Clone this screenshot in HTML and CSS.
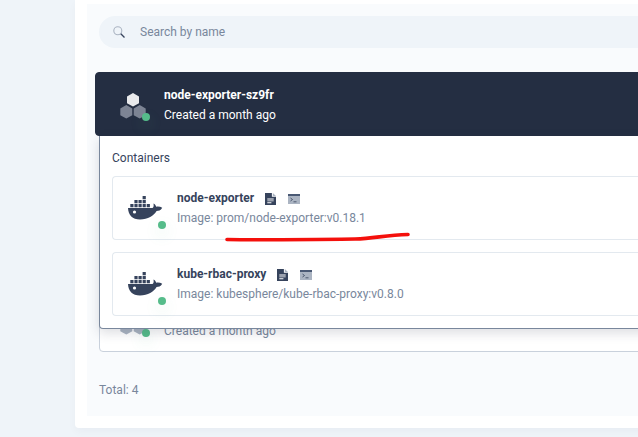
FILE: index.html
```html
<!DOCTYPE html>
<html lang="en">
<head>
<meta charset="utf-8">
<title>Pods</title>
<link rel="stylesheet" href="styles.css">
</head>
<body>
<svg width="0" height="0" class="defs" aria-hidden="true">
  <symbol id="hexes" viewBox="0 0 28 28">
    <path d="M14 1l6 3.4v6.8l-6 3.4-6-3.4V4.400z" fill="#fff" fill-opacity=".9"/>
    <path d="M7.300 13l6 3.400v6.800l-6 3.400-6-3.400v-6.800z" fill="currentColor"/>
    <path d="M20.700 13l6 3.400v6.800l-6 3.400-6-3.400v-6.800z" fill="currentColor"/>
  </symbol>
  <symbol id="docker" viewBox="0 0 36 24">
    <g fill="#36435c">
      <path d="M15.600 0h3.200v3.200h-3.200zM7.400 4h3.200v3.200H7.400zM11.500 4h3.200v3.200h-3.200zM15.600 4h3.200v3.200h-3.200zM3.300 8h3.200v3.200H3.300zM7.400 8h3.200v3.200H7.400zM11.500 8h3.200v3.200h-3.200zM15.600 8h3.200v3.200h-3.200zM19.700 8h3.200v3.200h-3.200z"/>
      <path d="M1 12h24.200c1.200 0 1.800-1.400 1.300-4.400 1.300.6 2.300 1.700 2.700 3.200 2-.5 4.200 0 6 1-1.400 2.800-3.800 3.200-5.600 3.200C26.800 19.800 21 23.500 13 23.500 5.500 23.500 1.300 19 1 12z"/>
    </g>
    <circle cx="7.500" cy="16" r="1.600" fill="#fff"/>
  </symbol>
  <symbol id="doc" viewBox="0 0 12 13">
    <path d="M0 0h7.500v4H12v9H0z" fill="#36435c"/>
    <path d="M8.500 0L12 3.200H8.500z" fill="#abb4c2"/>
    <path d="M2.500 6h7v1h-7zM2.500 8h7v1h-7zM2.500 10h4.500v1h-4.500z" fill="#fff"/>
  </symbol>
  <symbol id="term" viewBox="0 0 12 10">
    <path d="M0 0h12v10H0z" fill="#abb4c2"/>
    <path d="M0 0h12v2H0z" fill="#4a5974"/>
    <path d="M2.500 4l2 1.500-2 1.500M5.500 7.800h3" fill="none" stroke="#36435c" stroke-width=".8"/>
  </symbol>
</svg>

<main class="card">
  <section class="panel">
    <div class="search">
      <svg class="search-icon" viewBox="0 0 12 12" aria-hidden="true">
        <circle cx="4.800" cy="4.800" r="4" fill="none" stroke="#abb4c2" stroke-width="1.100"/>
        <path d="M7.800 7.800L11.500 11.500" stroke="#36435c" stroke-width="1.300"/>
      </svg>
      <span class="search-text">Search by name</span>
    </div>

    <div class="list">
      <div class="row row-selected">
        <div class="row-icon">
          <svg class="hexes"><use href="#hexes"/></svg>
          <span class="dot dot-pod"></span>
        </div>
        <div class="row-text">
          <div class="row-name">node-exporter-sz9fr</div>
          <div class="row-time">Created a month ago</div>
        </div>
      </div>

      <div class="popup">
        <h4 class="popup-title">Containers</h4>
        <div class="container">
          <div class="container-icon">
            <svg class="docker"><use href="#docker"/></svg>
            <span class="dot dot-container"></span>
          </div>
          <div>
            <div class="container-head">
              <span class="container-name">node-exporter</span>
              <svg class="icon-doc"><use href="#doc"/></svg>
              <svg class="icon-term"><use href="#term"/></svg>
            </div>
            <div class="container-image">Image: prom/node-exporter:v0.18.1</div>
          </div>
        </div>
        <div class="container">
          <div class="container-icon">
            <svg class="docker"><use href="#docker"/></svg>
            <span class="dot dot-container"></span>
          </div>
          <div>
            <div class="container-head">
              <span class="container-name">kube-rbac-proxy</span>
              <svg class="icon-doc"><use href="#doc"/></svg>
              <svg class="icon-term"><use href="#term"/></svg>
            </div>
            <div class="container-image">Image: kubesphere/kube-rbac-proxy:v0.8.0</div>
          </div>
        </div>
        <svg class="scribble" viewBox="0 0 186 10" aria-hidden="true">
          <path d="M2 7.500C40 8 90 7.500 130 7C150 6.500 160 3 183 2.500" fill="none" stroke="#f4100c" stroke-width="3.600" stroke-linecap="round"/>
        </svg>
      </div>

      <div class="row"></div>
      <div class="row"></div>
      <div class="row">
        <div class="row-icon">
          <svg class="hexes hexes-muted"><use href="#hexes"/></svg>
          <span class="dot dot-pod"></span>
        </div>
        <div class="row-text">
          <div class="row-name row-name-dark">node-exporter</div>
          <div class="row-time row-time-muted">Created a month ago</div>
        </div>
      </div>
    </div>

    <div class="total">Total: 4</div>
  </section>
</main>
</body>
</html>
```
FILE: styles.css
```css
html, body {
  margin: 0;
  height: 437px;
  overflow: hidden;
  background: #eff4f9;
}
body {
  font-family: Roboto, "Liberation Sans", sans-serif;
  font-size: 12px;
  line-height: 16px;
  color: #36435c;
}
.defs { display: block; width: 0; height: 0; }

.card {
  box-sizing: border-box;
  width: 640px;
  height: 428px;
  margin-left: 75px;
  padding: 4px 0 12px 12px;
  background: #fff;
  border-radius: 0 0 4px 4px;
  box-shadow: 0 4px 8px rgba(36, 46, 66, .03);
}
.panel {
  height: 412px;
  padding: 12px 0 0 12px;
  box-sizing: border-box;
  background: #f9fbfd;
}

.search {
  display: flex;
  align-items: center;
  height: 32px;
  padding-left: 14px;
  background: #eff4f9;
  border-radius: 16px 0 0 16px;
}
.search-icon { width: 12px; height: 12px; flex: none; }
.search-text { margin-left: 15px; color: #79879c; }

.list {
  position: relative;
  display: flex;
  flex-direction: column;
  gap: 8px;
  margin-top: 24px;
}
.row {
  box-sizing: border-box;
  display: flex;
  align-items: center;
  height: 64px;
  padding-left: 19px;
  background: #fff;
  border: 1px solid #c9d1dc;
  border-radius: 4px 0 0 4px;
}
.row-selected {
  margin-left: -4px;
  padding-left: 23px;
  background: #242e42;
  border-color: #242e42;
  color: #fff;
}
.row-icon {
  position: relative;
  width: 28px;
  height: 28px;
  margin-right: 17px;
  flex: none;
}
.hexes { display: block; width: 28px; height: 28px; margin-top: 2px; color: #7d8494; }
.hexes-muted { color: #abb4c2; }
.dot {
  position: absolute;
  width: 8px;
  height: 8px;
  border-radius: 50%;
  background: #55bc8a;
  box-shadow: 0 6px 14px rgba(85, 188, 138, .18);
}
.dot-pod { left: 23px; top: 23px; }
.row-text { padding-top: 2px; }
.row-name { font-weight: 700; margin-bottom: 4px; }
.row-name-dark { color: #242e42; }
.row-time { color: #fff; }
.row-time-muted { color: #79879c; }

.popup {
  position: absolute;
  top: 64px;
  left: 0;
  right: 0;
  box-sizing: border-box;
  height: 193px;
  padding: 14px 0 0 12px;
  background: #fff;
  border: 1px solid #79879c;
  border-top: 0;
  border-radius: 0 0 0 4px;
  box-shadow: 0 4px 12px rgba(36, 46, 66, .16);
  z-index: 2;
}
.popup-title {
  margin: 0 0 10px;
  font-size: 12px;
  font-weight: 400;
  line-height: 16px;
}
.container {
  box-sizing: border-box;
  display: flex;
  align-items: center;
  height: 64px;
  margin-bottom: 12px;
  padding-left: 14px;
  background: #fff;
  border: 1px solid #e3e9ef;
  border-right: 0;
  border-radius: 4px 0 0 4px;
}
.container-icon {
  position: relative;
  width: 36px;
  height: 24px;
  margin-right: 14px;
  flex: none;
}
.docker { display: block; width: 36px; height: 24px; }
.dot-container { left: 31px; top: 25px; }
.container-head {
  display: flex;
  align-items: center;
  height: 16px;
  margin-bottom: 4px;
}
.container-name { font-weight: 700; color: #36435c; }
.icon-doc { width: 11px; height: 12px; margin: 2px 0 0 11px; }
.icon-term { width: 12px; height: 10px; margin: 2px 0 0 12px; }
.container-image { color: #79879c; }

.scribble {
  position: absolute;
  left: 125px;
  top: 96px;
  width: 186px;
  height: 10px;
}

.total {
  margin-top: 30px;
  color: #79879c;
}
```
